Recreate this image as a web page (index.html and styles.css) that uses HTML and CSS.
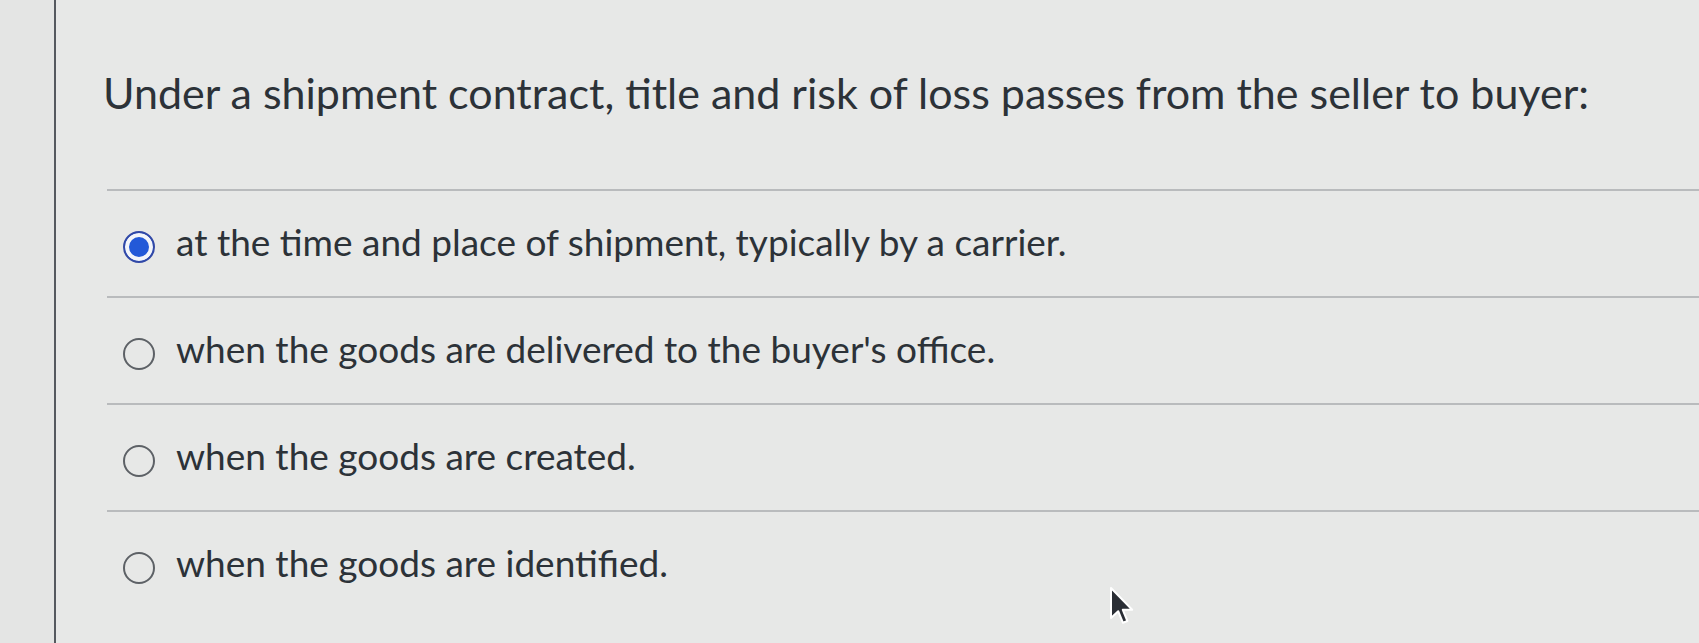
FILE: index.html
```html
<!DOCTYPE html>
<html lang="en">
<head>
<meta charset="utf-8">
<title>Quiz question</title>
<link rel="stylesheet" href="styles.css">
</head>
<body>
  <div class="screen">
    <aside class="gutter"></aside>
    <main class="quiz">
      <h1 class="question">Under a shipment contract, title and risk of loss passes from the seller to buyer:</h1>
      <ul class="answers">
        <li class="answer"><span class="radio checked"></span><span class="label">at the time and place of shipment, typically by a carrier.</span></li>
        <li class="answer"><span class="radio"></span><span class="label">when the goods are delivered to the buyer's office.</span></li>
        <li class="answer"><span class="radio"></span><span class="label">when the goods are created.</span></li>
        <li class="answer"><span class="radio"></span><span class="label">when the goods are identified.</span></li>
      </ul>
    </main>
  </div>
  <svg class="cursor" width="26" height="40" viewBox="0 0 13 20" aria-hidden="true">
    <path d="M1 1 L1 16 L4.6 12.6 L7 18.4 L9.2 17.5 L6.9 11.9 L11.6 11.9 Z" fill="#2a2e35" stroke="#ffffff" stroke-width="1" stroke-linejoin="round"/>
  </svg>
</body>
</html>
```

FILE: styles.css
```css
* {
  box-sizing: border-box;
}

html, body {
  margin: 0;
  padding: 0;
  height: 100%;
}

body {
  background: #e7e8e7;
  font-family: Lato, "Open Sans", sans-serif;
  color: #2c3238;
  overflow: hidden;
  position: relative;
}

.screen {
  display: flex;
  height: 100%;
}

.gutter {
  width: 56px;
  flex: 0 0 56px;
  border-right: 2px solid #55595f;
  background: #e4e5e4;
}

.quiz {
  flex: 1;
  padding-left: 47px;
}

.question {
  margin: 68px 0 0;
  font-size: 43px;
  font-weight: 400;
  line-height: 50px;
}

.answers {
  list-style: none;
  margin: 71px 0 0 4px;
  padding: 0;
}

.answer {
  display: flex;
  align-items: center;
  gap: 21px;
  border-top: 2px solid #b9bbbd;
  padding: 29px 0 32px 16px;
  height: 107px;
}

.radio {
  flex: 0 0 32px;
  width: 32px;
  height: 32px;
  margin-top: 10px;
  border: 2px solid #5d6166;
  border-radius: 50%;
}

.radio.checked {
  border-color: #3148a6;
  background: #2359d8;
  box-shadow: inset 0 0 0 4px #f3f5fa;
}

.label {
  font-size: 37px;
  line-height: 44px;
}

.cursor {
  position: absolute;
  left: 1109px;
  top: 586px;
}
```
